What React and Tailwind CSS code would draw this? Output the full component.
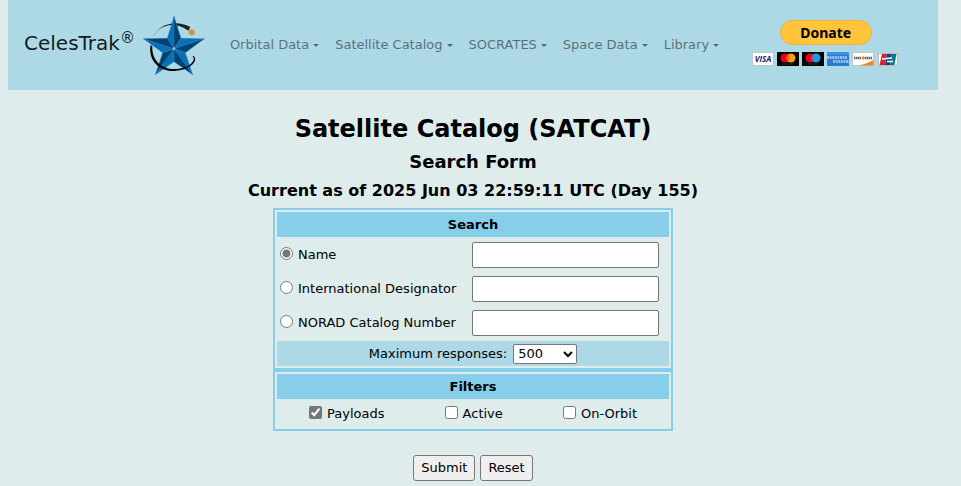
import { useState } from 'react';

const NAV_ITEMS = ['Orbital Data', 'Satellite Catalog', 'SOCRATES', 'Space Data', 'Library'];

const SEARCH_FIELDS = [
  { id: 'NAME', label: 'Name' },
  { id: 'INTDES', label: 'International Designator' },
  { id: 'CATNR', label: 'NORAD Catalog Number' },
];

const MAX_OPTIONS = ['100', '250', '500', '1000'];

function StarLogo() {
  return (
    <svg viewBox="0 0 240 225" className="h-[75px] w-20" aria-hidden="true">
      {/* orbit behind the star */}
      <path d="M55 93 C72 60 112 42 160 74 L166 63 C120 40 72 55 55 93 Z" fill="#222" />
      <g stroke="#2f7fbb" strokeWidth="1" strokeLinejoin="round">
        <path d="M117 31 L97 97 L117 128 Z" fill="#0870b9" />
        <path d="M117 31 L138 97 L117 128 Z" fill="#034273" />
        <path d="M208 98 L138 97 L117 128 Z" fill="#0870b9" />
        <path d="M208 98 L151 140 L117 128 Z" fill="#034273" />
        <path d="M173 206 L151 140 L117 128 Z" fill="#0870b9" />
        <path d="M173 206 L117 167 L117 128 Z" fill="#034273" />
        <path d="M61 206 L117 167 L117 128 Z" fill="#0870b9" />
        <path d="M61 206 L83 140 L117 128 Z" fill="#034273" />
        <path d="M25 98 L83 140 L117 128 Z" fill="#0870b9" />
        <path d="M25 98 L97 97 L117 128 Z" fill="#034273" />
      </g>
      <path
        d="M47 116 C38 166 76 196 117 195 C150 194 184 176 180 156 C179 152 176 150 172 150 C180 156 176 166 168 173 C156 184 138 189 117 189 C82 189 50 164 52 122 Z"
        fill="#000"
      />
      <circle cx="117" cy="128" r="4" fill="#8cc4ea" />
      <circle cx="170" cy="79" r="9" fill="#c8964f" />
    </svg>
  );
}

function PaymentCards() {
  return (
    <div className="flex items-center gap-[3px]">
      <svg viewBox="0 0 22 14" className="h-[14px] w-[22px]" role="img" aria-label="Visa">
        <rect x=".5" y=".5" width="21" height="13" fill="#fff" stroke="#c4c4c4" />
        <text x="11" y="10" fontSize="8" fontWeight="bold" fontStyle="italic" textAnchor="middle" fill="#1a1f71" fontFamily="Open Sans, sans-serif">VISA</text>
      </svg>
      <svg viewBox="0 0 22 14" className="h-[14px] w-[22px]" role="img" aria-label="Mastercard">
        <rect width="22" height="14" fill="#000" />
        <circle cx="8" cy="6" r="4.5" fill="#eb001b" />
        <circle cx="14" cy="6" r="4.5" fill="#f79e1b" />
        <path d="M11 2.600 a4.500 4.500 0 0 1 0 6.800 a4.500 4.500 0 0 1 0 -6.800" fill="#ff5f00" />
        <path d="M5 12 h12" stroke="#555" strokeDasharray="1 .5" />
      </svg>
      <svg viewBox="0 0 22 14" className="h-[14px] w-[22px]" role="img" aria-label="Maestro">
        <rect width="22" height="14" fill="#000" />
        <circle cx="8" cy="6" r="4.5" fill="#eb001b" />
        <circle cx="14" cy="6" r="4.5" fill="#1a9fe0" />
        <path d="M11 2.600 a4.500 4.500 0 0 1 0 6.800 a4.500 4.500 0 0 1 0 -6.800" fill="#6c6bbd" />
        <path d="M6 12 h10" stroke="#555" strokeDasharray="1 .5" />
      </svg>
      <svg viewBox="0 0 22 14" className="h-[14px] w-[22px]" role="img" aria-label="American Express">
        <rect width="22" height="14" fill="#2a7bd0" />
        <rect width="22" height="3" fill="#3f8fe0" />
        <path d="M0 5.500 h20 M6 9.500 h16" stroke="#8fc0ee" strokeWidth="3" strokeDasharray="2 .6" />
      </svg>
      <svg viewBox="0 0 22 14" className="h-[14px] w-[22px]" role="img" aria-label="Discover">
        <rect x=".5" y=".5" width="21" height="13" fill="#fff" stroke="#c4c4c4" />
        <path d="M21.5 8 Q15 12 7 13.5 H21.5 Z" fill="#f58220" />
        <path d="M2 6 h7 M13 6 h7" stroke="#666" strokeWidth="2.5" strokeDasharray="1.6 .4" />
        <circle cx="11.2" cy="6" r="1.7" fill="#f58220" />
      </svg>
      <svg viewBox="0 0 22 14" className="h-[14px] w-[22px]" role="img" aria-label="UnionPay">
        <rect x="1.5" y="1.5" width="19" height="12" fill="#fff" stroke="#bbb" />
        <path d="M5 2 H10 L8 13 H2.500 Z" fill="#d8232f" />
        <path d="M10 2 H15 L13 13 H8 Z" fill="#0b4a82" />
        <path d="M15 2 H19.500 L17.500 13 H13 Z" fill="#0a7a80" />
        <path d="M5 7 L15 6 M10 9.500 H16" stroke="#fff" strokeWidth="1.300" />
      </svg>
    </div>
  );
}

function Header() {
  return (
    <header className="flex h-[90px] items-center bg-[#add8e6] pl-4">
      <a href="#" className="flex shrink-0 items-center pb-1 text-xl text-black/90">
        <span>
          CelesTrak<sup className="text-[15px]">®</sup>
        </span>
        <StarLogo />
      </a>
      <nav className="ml-[7px] flex shrink-0">
        {NAV_ITEMS.map((item) => (
          <a key={item} href="#" className="flex items-center gap-1 px-2 text-black/50">
            {item}
            <span className="border-x-[3px] border-t-[3px] border-x-transparent border-t-current" />
          </a>
        ))}
      </nav>
      <div className="ml-[25px] flex flex-col items-center gap-[7px] pb-1">
        <button
          type="button"
          className="h-[25px] w-[92px] rounded-full border border-[#f0b23a] bg-[#ffc439] font-['Noto_Sans',sans-serif] text-sm leading-5 font-bold"
        >
          Donate
        </button>
        <PaymentCards />
      </div>
    </header>
  );
}

export default function App() {
  const [searchBy, setSearchBy] = useState('NAME');

  return (
    <div className="min-h-screen bg-[#deeceb] pr-[23px] pl-2 font-['DejaVu_Sans',Verdana,sans-serif] text-[13px] leading-5 text-black">
      <Header />
      <main className="flex flex-col items-center pt-[25px] text-center">
        <h1 className="text-2xl leading-7 font-bold">Satellite Catalog (SATCAT)</h1>
        <h2 className="mt-[7px] text-lg leading-6 font-bold">Search Form</h2>
        <h3 className="mt-[5px] text-base leading-6 font-bold">
          Current as of 2025 Jun 03 22:59:11 UTC (Day 155)
        </h3>

        <form className="mt-[5px] w-[400px]" onSubmit={(e) => e.preventDefault()}>
          <section className="flex flex-col gap-0.5 border-2 border-[#87ceeb] p-0.5">
            <h4 className="h-[25px] bg-[#87ceeb] leading-[25px] font-bold">Search</h4>
            {SEARCH_FIELDS.map(({ id, label }) => (
              <div key={id} className="flex h-8 items-center px-[3px]">
                <label className="flex w-48 items-center gap-[5px] text-left">
                  <input
                    type="radio"
                    name="searchBy"
                    value={id}
                    checked={searchBy === id}
                    onChange={() => setSearchBy(id)}
                    className="mb-1 size-[13px] accent-[#767676]"
                  />
                  {label}
                </label>
                <input
                  type="text"
                  aria-label={label}
                  className="h-[26px] w-[187px] rounded-xs border border-[#767676] bg-white px-1"
                />
              </div>
            ))}
            <div className="flex h-[25px] items-center justify-center gap-1.5 bg-[#add8e6]">
              <label htmlFor="max">Maximum responses:</label>
              <select
                id="max"
                defaultValue="500"
                className="h-5 w-16 rounded-xs border border-[#767676] bg-white"
              >
                {MAX_OPTIONS.map((n) => (
                  <option key={n}>{n}</option>
                ))}
              </select>
            </div>
          </section>

          <section className="flex flex-col gap-0.5 border-2 border-[#87ceeb] p-0.5">
            <h4 className="h-[25px] bg-[#87ceeb] leading-[25px] font-bold">Filters</h4>
            <div className="flex h-[26px] items-center justify-between px-8">
              {['Payloads', 'Active', 'On-Orbit'].map((label) => (
                <label key={label} className="flex items-center gap-[5px]">
                  <input
                    type="checkbox"
                    defaultChecked={label === 'Payloads'}
                    className="mb-1 size-[13px] accent-[#767676]"
                  />
                  {label}
                </label>
              ))}
            </div>
          </section>

          <div className="mt-6 flex justify-center gap-[5px]">
            <button type="submit" className="rounded-[3px] border border-[#767676] bg-[#efefef] px-[7px] py-0.5">
              Submit
            </button>
            <button type="reset" className="rounded-[3px] border border-[#767676] bg-[#efefef] px-[7px] py-0.5">
              Reset
            </button>
          </div>
        </form>
      </main>
    </div>
  );
}
